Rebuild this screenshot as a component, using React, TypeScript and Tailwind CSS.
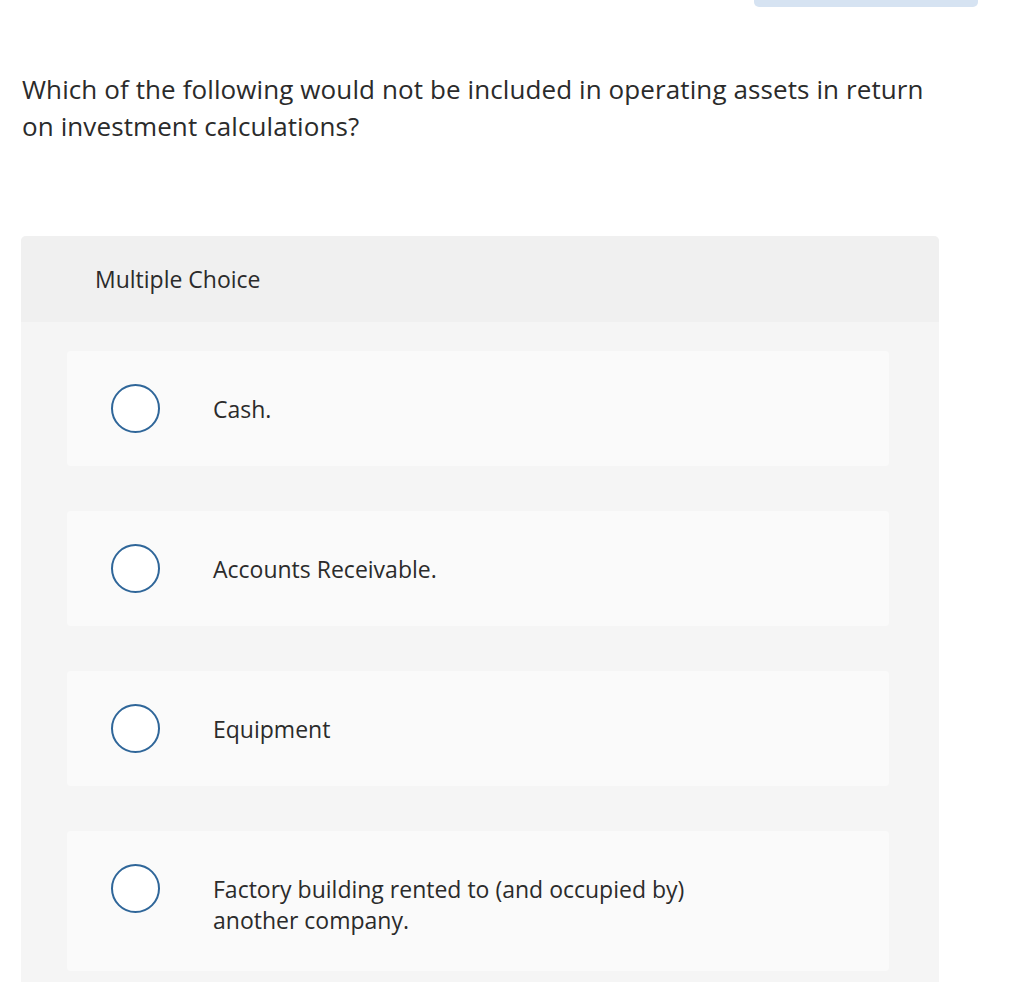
import React from 'react';

const options = [
    'Cash.',
    'Accounts Receivable.',
    'Equipment',
    'Factory building rented to (and occupied by) another company.',
];

const OptionCard = ({ label }: { label: string }) => (
    <div className="flex items-start bg-[#fafafa] rounded-[4px] pl-[44px] pr-6 py-[33px]">
        <div className="w-[49px] h-[49px] shrink-0 rounded-full border-2 border-[#2f6699] bg-white" />
        <div className="ml-[53px] pt-[10px] pb-[2px] max-w-[500px] text-[23px] leading-[31px] text-[#2b2b2b]">{label}</div>
    </div>
);

export default function App() {
    return (
        <div className="relative w-[1024px] h-[992px] bg-white overflow-hidden" style={{ fontFamily: '"Open Sans", "Noto Sans", sans-serif' }}>
            {/* top-right progress strip */}
            <div className="absolute left-[754px] top-0 w-[224px] h-[7px] rounded-b-[5px] bg-[#d6e3f2]" />

            <div className="h-[145px] pt-[71px] pl-[22px] pr-[60px]">
                <p className="text-[26px] leading-[37px] tracking-[0.1px] text-[#2b2b2b] max-w-[930px]">
                    Which of the following would not be included in operating assets in return on investment calculations?
                </p>
            </div>

            <div className="ml-[21px] mt-[91px] w-[918px] h-[746px] rounded-t-[5px] bg-[#f5f5f5] overflow-hidden">
                <div className="h-[86px] bg-[#f0f0f0] flex items-center pl-[74px]">
                    <span className="text-[23px] text-[#2b2b2b]">Multiple Choice</span>
                </div>
                <div className="pt-[29px] pl-[46px] pr-[50px] flex flex-col gap-[45px]">
                    {options.map((o) => (
                        <OptionCard key={o} label={o} />
                    ))}
                </div>
            </div>
        </div>
    );
}
